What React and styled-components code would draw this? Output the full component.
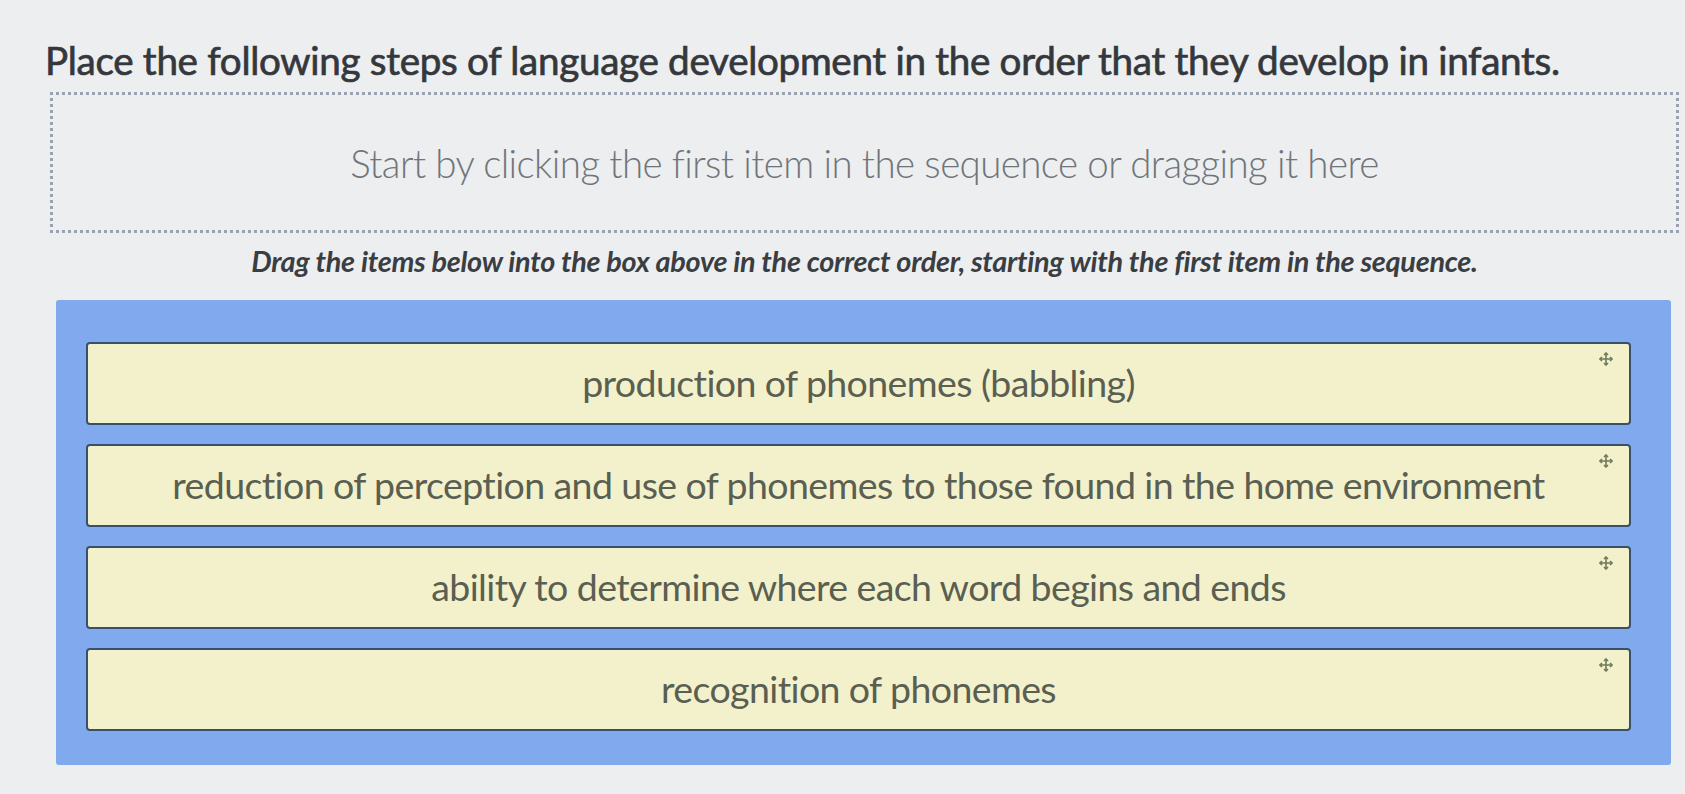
import React from 'react';
import styled, { createGlobalStyle } from 'styled-components';

const steps = [
  'production of phonemes (babbling)',
  'reduction of perception and use of phonemes to those found in the home environment',
  'ability to determine where each word begins and ends',
  'recognition of phonemes',
];

const MoveIcon = () => (
  <svg width="14" height="14" viewBox="0 0 14 14" fill="none" stroke="#6f7a5c" strokeWidth="1.6">
    <path d="M7 1v12M1 7h12" />
    <path d="M5 3l2-2 2 2M5 11l2 2 2-2M3 5L1 7l2 2M11 5l2 2-2 2" />
  </svg>
);

const App = () => {
  return (
    <>
      <GlobalStyles />
      <Page>
        <Title>Place the following steps of language development in the order that they develop in infants.</Title>
        <DropZone>Start by clicking the first item in the sequence or dragging it here</DropZone>
        <Hint>Drag the items below into the box above in the correct order, starting with the first item in the sequence.</Hint>
        <Bank>
          {steps.map((s) => (
            <Item key={s}>
              {s}
              <Handle><MoveIcon /></Handle>
            </Item>
          ))}
        </Bank>
      </Page>
    </>
  );
};

export default App;

const GlobalStyles = createGlobalStyle`
* {
  margin: 0;
  padding: 0;
  box-sizing: border-box;
}
body {
  background: #eceef0;
  font-family: Lato, 'Open Sans', sans-serif;
}
`;

const Page = styled.div`
  display: flex;
  flex-direction: column;
  padding: 36px 6px 0 50px;
  min-height: 794px;
`;

const Title = styled.h1`
  font-size: 38.6px;
  font-weight: 400;
  -webkit-text-stroke: 0.7px #34383c;
  color: #34383c;
  letter-spacing: -0.3px;
  line-height: 48px;
  margin-left: -5px;
  white-space: nowrap;
`;

const DropZone = styled.div`
  margin-top: 8px;
  height: 141px;
  border: 3px dotted #9aa2b0;
  display: flex;
  align-items: center;
  justify-content: center;
  font-size: 38.5px;
  font-weight: 300;
  color: #70757a;
  letter-spacing: -0.6px;
`;

const Hint = styled.p`
  text-align: center;
  font-size: 28.9px;
  font-weight: 700;
  font-style: italic;
  color: #3a3e42;
  margin-top: 11px;
  line-height: 34px;
  letter-spacing: -0.3px;
`;

const Bank = styled.div`
  margin: 22px 8px 0 6px;
  background: #80a9ee;
  border-radius: 3px;
  padding: 42px 40px 34px 30px;
  display: flex;
  flex-direction: column;
  gap: 19px;
`;

const Item = styled.div`
  position: relative;
  height: 83px;
  background: #f3f1cb;
  border: 2px solid #38506a;
  border-radius: 4px;
  display: flex;
  align-items: center;
  justify-content: center;
  font-size: 37.5px;
  font-weight: 400;
  color: #5a5f52;
  letter-spacing: -0.6px;
  padding-bottom: 2px;
`;

const Handle = styled.span`
  position: absolute;
  top: 8px;
  right: 16px;
  display: flex;
`;
